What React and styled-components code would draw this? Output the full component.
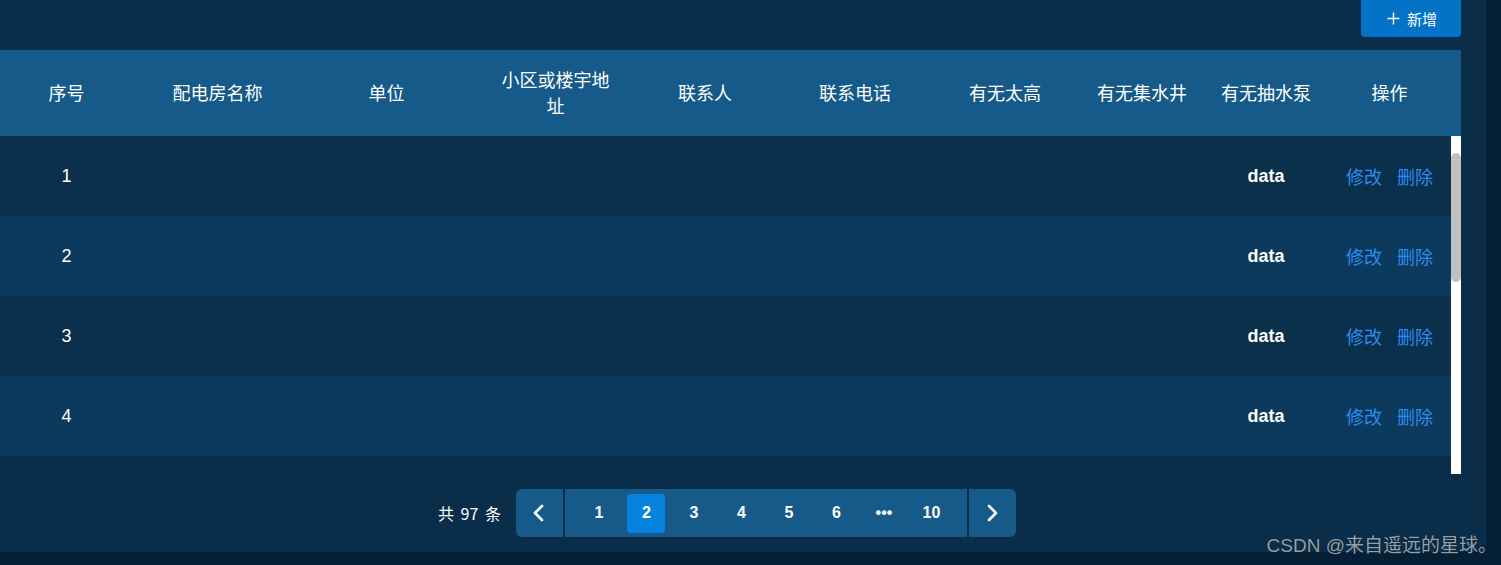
import React from "react";
import styled, { createGlobalStyle } from "styled-components";

const GlobalStyle = createGlobalStyle`
  html, body {
    margin: 0;
    padding: 0;
    background: #052036;
    font-family: "Liberation Sans", "Noto Sans CJK SC", sans-serif;
  }
`;

const columns = [
  { key: "index", title: "序号", width: "133px" },
  { key: "name", title: "配电房名称", width: "169px" },
  { key: "unit", title: "单位", width: "169px" },
  { key: "address", title: "小区或楼宇地址", width: "169px", pad: 24 },
  { key: "contact", title: "联系人", width: "130px" },
  { key: "phone", title: "联系电话", width: "170px" },
  { key: "tall", title: "有无太高", width: "130px" },
  { key: "well", title: "有无集水井", width: "144px" },
  { key: "pump", title: "有无抽水泵", width: "104px" },
  { key: "action", title: "操作", width: "1fr" },
];

const template = columns.map((c) => c.width).join(" ");

const rows = Array.from({ length: 4 }, (_, i) => ({ id: i + 1, pump: "data" }));

const Page = styled.div`
  position: relative;
  width: 1501px;
  height: 565px;
  overflow: hidden;
`;

const Panel = styled.div`
  width: 1486px;
  height: 552px;
  background: #0a2e49;
  border-radius: 0 0 8px 0;
  display: flex;
  flex-direction: column;
`;

const Toolbar = styled.div`
  height: 50px;
  width: 1461px;
  display: flex;
  justify-content: flex-end;
  align-items: flex-start;
`;

const AddButton = styled.button`
  width: 100px;
  height: 37px;
  border: none;
  border-radius: 0 0 4px 4px;
  background: #0473c7;
  color: #ffffff;
  font-family: "Noto Sans CJK SC", sans-serif;
  font-size: 15px;
  display: flex;
  align-items: center;
  justify-content: center;
  gap: 7px;
  padding: 0 0 1px 2px;
  cursor: pointer;
`;

const Table = styled.div`
  width: 1461px;
`;

const HeadRow = styled.div`
  display: grid;
  grid-template-columns: ${template};
  height: 86px;
  background: #155a88;
`;

const HeadCell = styled.div`
  display: flex;
  align-items: center;
  justify-content: center;
  text-align: center;
  padding: 0 ${(p) => p.$pad ?? 4}px 3px;
  color: #ffffff;
  font-family: "Noto Sans CJK SC", sans-serif;
  font-size: 18px;
  line-height: 26px;
`;

const BodyWrap = styled.div`
  display: flex;
  height: 338px;
`;

const Body = styled.div`
  flex: 1;
  overflow: hidden;
`;

const ScrollTrack = styled.div`
  width: 10px;
  background: #ffffff;
  padding-top: 17px;
  box-sizing: border-box;
`;

const ScrollThumb = styled.div`
  height: 129px;
  background: #c1c1c1;
  border-radius: 5px;
`;

const Row = styled.div`
  display: grid;
  grid-template-columns: ${template};
  height: 80px;
  background: ${(p) => (p.$even ? "#0c3a5c" : "#0a304c")};
`;

const Cell = styled.div`
  display: flex;
  align-items: center;
  justify-content: center;
  color: #ffffff;
  font-size: 18px;
  font-weight: ${(p) => (p.$bold ? 700 : 400)};
`;

const ActionCell = styled(Cell)`
  padding-left: 10px;
  gap: 15px;
`;

const LinkButton = styled.a`
  color: #2d8cf0;
  font-family: "Noto Sans CJK SC", sans-serif;
  font-size: 18px;
  cursor: pointer;
`;

const Footer = styled.div`
  width: 1454px;
  margin-top: 15px;
  display: flex;
  justify-content: center;
  align-items: center;
  gap: 15px;
`;

const Total = styled.span`
  color: #ffffff;
  font-family: "Noto Sans CJK SC", sans-serif;
  font-size: 16px;
  word-spacing: 3px;
`;

const Pager = styled.div`
  display: flex;
  height: 48px;
  background: #155a88;
  border-radius: 6px;
  overflow: hidden;
`;

const Arrow = styled.button`
  width: 47px;
  border: none;
  background: transparent;
  display: flex;
  align-items: center;
  justify-content: center;
  padding: 0;
  cursor: pointer;
`;

const Divider = styled.div`
  width: 2px;
  background: #0a2e49;
`;

const Pages = styled.div`
  width: 402px;
  display: flex;
  align-items: center;
  gap: 9.5px;
  padding-left: 15px;
  box-sizing: border-box;
`;

const PageItem = styled.div`
  width: 38px;
  height: 39px;
  border-radius: 4px;
  display: flex;
  align-items: center;
  justify-content: center;
  color: #ffffff;
  font-size: 16px;
  font-weight: 700;
  background: ${(p) => (p.$active ? "#0683dc" : "transparent")};
`;

const Watermark = styled.div`
  position: absolute;
  right: 4px;
  bottom: 8px;
  color: rgba(200, 206, 212, 0.75);
  font-family: "Liberation Sans", "Noto Sans CJK SC", sans-serif;
  font-size: 19px;
  text-shadow: 0 0 1px rgba(0, 0, 0, 0.6);
  pointer-events: none;
`;

const Chevron = ({ dir }) => (
  <svg width="14" height="18" viewBox="0 0 14 18">
    <path
      d={dir === "left" ? "M10 2 L3 9 L10 16" : "M4 2 L11 9 L4 16"}
      fill="none"
      stroke="#ffffff"
      strokeWidth="2.6"
      strokeLinecap="round"
      strokeLinejoin="round"
    />
  </svg>
);

const Plus = () => (
  <svg width="13" height="13" viewBox="0 0 13 13">
    <path d="M6.5 0.5 V12.5 M0.5 6.5 H12.5" stroke="#ffffff" strokeWidth="1.4" />
  </svg>
);

const pages = ["1", "2", "3", "4", "5", "6", "•••", "10"];

export default function App() {
  return (
    <Page>
      <GlobalStyle />
      <Panel>
        <Toolbar>
          <AddButton>
            <Plus />
            新增
          </AddButton>
        </Toolbar>
        <Table>
          <HeadRow>
            {columns.map((c) => (
              <HeadCell key={c.key} $pad={c.pad}>
                {c.title}
              </HeadCell>
            ))}
          </HeadRow>
          <BodyWrap>
            <Body>
              {rows.map((r, i) => (
                <Row key={r.id} $even={i % 2 === 1}>
                  <Cell>{r.id}</Cell>
                  <Cell />
                  <Cell />
                  <Cell />
                  <Cell />
                  <Cell />
                  <Cell />
                  <Cell />
                  <Cell $bold>{r.pump}</Cell>
                  <ActionCell>
                    <LinkButton>修改</LinkButton>
                    <LinkButton>删除</LinkButton>
                  </ActionCell>
                </Row>
              ))}
            </Body>
            <ScrollTrack>
              <ScrollThumb />
            </ScrollTrack>
          </BodyWrap>
        </Table>
        <Footer>
          <Total>共 97 条</Total>
          <Pager>
            <Arrow>
              <Chevron dir="left" />
            </Arrow>
            <Divider />
            <Pages>
              {pages.map((p) => (
                <PageItem key={p} $active={p === "2"}>
                  {p}
                </PageItem>
              ))}
            </Pages>
            <Divider />
            <Arrow>
              <Chevron dir="right" />
            </Arrow>
          </Pager>
        </Footer>
      </Panel>
      <Watermark>CSDN @来自遥远的星球。</Watermark>
    </Page>
  );
}
